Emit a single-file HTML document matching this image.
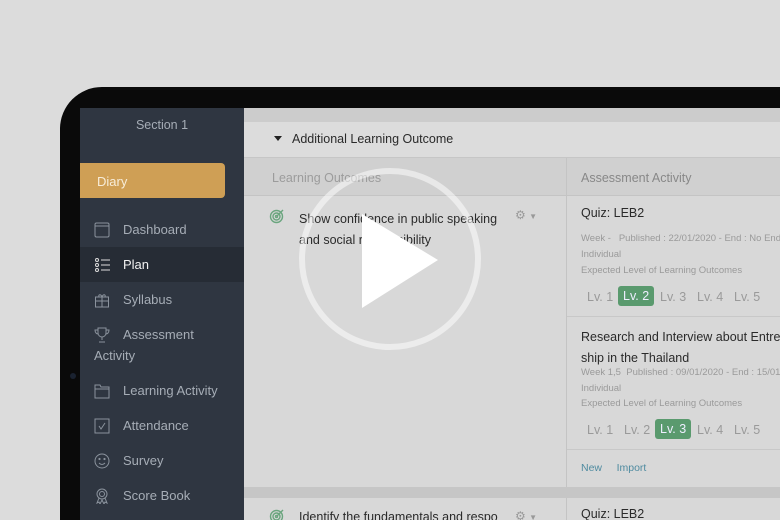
<!DOCTYPE html>
<html><head><style>
*{margin:0;padding:0;box-sizing:border-box}
html,body{width:780px;height:520px;overflow:hidden}
body{background:#dcdcdc;font-family:"Liberation Sans",sans-serif;position:relative}
.abs{position:absolute;white-space:nowrap}
.bezel{left:60px;top:87px;width:720px;height:433px;background:#0a0a0a;border-radius:42px 0 0 0}
.side{left:80px;top:108px;width:164px;height:412px;background:#2f3641}
.item{position:absolute;left:0;width:164px;color:#a6adb6;font-size:13px}
.item span{position:absolute;left:43px}
.ic{position:absolute;left:14px;width:16px;height:16px}
.main{left:244px;top:108px;width:536px;height:412px;background:#d8d8d8;overflow:hidden}
.t{color:#2a2a2a;font-size:12.5px}
.s{color:#9a9a9a;font-size:9.5px}
.lv{position:absolute;font-size:12.5px;color:#9a9a9a}
.on{background:#5a9a6e;color:#eef;border-radius:3px;padding:3px 5px}
</style></head><body>
<div class="abs bezel"></div>
<div class="abs" style="left:70px;top:373px;width:6px;height:6px;border-radius:50%;background:#1a2230"></div>
<div class="abs side">
 <div class="abs" style="left:0;top:10px;width:164px;text-align:center;color:#a6adb6;font-size:12.5px">Section 1</div>
 <div class="abs" style="left:0;top:55px;width:145px;height:35px;background:#cf9f55;border-radius:0 4px 4px 0;color:#f7ecd8;font-size:13px;padding:11px 0 0 17px">Diary</div>
 <div class="item" style="top:114px"><svg class="ic" viewBox="0 0 16 16"><rect x="1" y="1" width="14" height="14" rx="1.5" fill="none" stroke="#8b939d"/><line x1="1" y1="4" x2="15" y2="4" stroke="#8b939d"/></svg><span>Dashboard</span></div>
 <div class="abs" style="left:0;top:139px;width:164px;height:35px;background:#262c35"></div>
 <div class="item" style="top:149px;color:#f2f2f2"><svg class="ic" viewBox="0 0 16 16" stroke="#ddd" fill="none"><circle cx="3" cy="3" r="1.5"/><circle cx="3" cy="8" r="1.5"/><circle cx="3" cy="13" r="1.5"/><line x1="7" y1="3" x2="16" y2="3"/><line x1="7" y1="8" x2="16" y2="8"/><line x1="7" y1="13" x2="16" y2="13"/></svg><span>Plan</span></div>
 <div class="item" style="top:184px"><svg class="ic" viewBox="0 0 16 16" stroke="#8b939d" fill="none"><rect x="1.5" y="5" width="13" height="10"/><line x1="1.5" y1="9" x2="14.5" y2="9"/><line x1="8" y1="5" x2="8" y2="15"/><path d="M5 5C4 2 7 2 8 5C9 2 12 2 11 5"/></svg><span>Syllabus</span></div>
 <div class="item" style="top:219px"><svg class="ic" viewBox="0 0 16 16" stroke="#8b939d" fill="none"><path d="M4 1h8v5a4 4 0 0 1-8 0z"/><path d="M4 3H1c0 3 2 4 3 4M12 3h3c0 3-2 4-3 4M8 10v3M5 15h6"/></svg><span>Assessment</span></div>
 <div class="item" style="top:240px"><span style="left:14px">Activity</span></div>
 <div class="item" style="top:275px"><svg class="ic" viewBox="0 0 16 16" stroke="#8b939d" fill="none"><path d="M1 2h5l1 2h8v11H1z"/><line x1="1" y1="6" x2="15" y2="6"/></svg><span>Learning Activity</span></div>
 <div class="item" style="top:310px"><svg class="ic" viewBox="0 0 16 16" stroke="#8b939d" fill="none"><rect x="1" y="1" width="14" height="14"/><path d="M5 8l2 3 4-6"/></svg><span>Attendance</span></div>
 <div class="item" style="top:345px"><svg class="ic" viewBox="0 0 16 16" stroke="#8b939d" fill="none"><circle cx="8" cy="8" r="7"/><path d="M5 10q3 3 6 0"/><circle cx="5.5" cy="6" r=".6"/><circle cx="10.5" cy="6" r=".6"/></svg><span>Survey</span></div>
 <div class="item" style="top:380px"><svg class="ic" viewBox="0 0 16 16" stroke="#8b939d" fill="none"><circle cx="8" cy="6" r="5"/><circle cx="8" cy="6" r="2.5"/><path d="M5 10l-2 5 2-1 1 2 2-4 2 4 1-2 2 1-2-5"/></svg><span>Score Book</span></div>
</div>
<div class="abs main">
 <div class="abs" style="left:0;top:0;width:536px;height:14px;background:#cccccc"></div>
 <div class="abs" style="left:0;top:14px;width:536px;height:36px;background:#dcdcdc;border-bottom:1px solid #c6c6c6"></div>
 <div class="abs" style="left:30px;top:28px;border-left:4px solid transparent;border-right:4px solid transparent;border-top:5px solid #222"></div>
 <div class="abs t" style="left:48px;top:24px">Additional Learning Outcome</div>
 <div class="abs" style="left:0;top:50px;width:536px;height:38px;background:#d0d0d0;border-bottom:1px solid #c4c4c4"></div>
 <div class="abs" style="left:28px;top:63px;color:#9c9c9c;font-size:12.5px">Learning Outcomes</div>
 <div class="abs" style="left:337px;top:63px;color:#888;font-size:12.5px">Assessment Activity</div>
 <div class="abs" style="left:322px;top:50px;width:1px;height:330px;background:#c4c4c4"></div>
 <svg class="abs" style="left:25px;top:100px" width="16" height="16" viewBox="0 0 16 16" fill="none" stroke="#6aa57e" stroke-width="1.4"><circle cx="7.5" cy="8.5" r="6"/><circle cx="7.5" cy="8.5" r="3.5"/><circle cx="7.5" cy="8.5" r="1"/><path d="M8 8l6-6"/></svg>
 <div class="abs t" style="left:55px;top:101px;line-height:21px">Show confidence in public speaking<br>and social responsibility</div>
 <div class="abs" style="left:271px;top:100px;color:#999;font-size:12px">⚙ <span style="font-size:8px">▼</span></div>
 <div class="abs t" style="left:337px;top:98px">Quiz: LEB2</div>
 <div class="abs s" style="left:337px;top:123px;line-height:16px">Week -&nbsp;&nbsp; Published : 22/01/2020 - End : No End<br>Individual<br>Expected Level of Learning Outcomes</div>
 <div class="lv" style="left:343px;top:182px">Lv. 1</div><div class="lv on" style="left:374px;top:178px">Lv. 2</div><div class="lv" style="left:416px;top:182px">Lv. 3</div><div class="lv" style="left:453px;top:182px">Lv. 4</div><div class="lv" style="left:490px;top:182px">Lv. 5</div>
 <div class="abs" style="left:323px;top:208px;width:213px;height:1px;background:#c8c8c8"></div>
 <div class="abs t" style="left:337px;top:219px;line-height:21px">Research and Interview about Entrepreneur-<br>ship in the Thailand</div>
 <div class="abs s" style="left:337px;top:257px;line-height:15.5px">Week 1,5&nbsp; Published : 09/01/2020 - End : 15/01<br>Individual<br>Expected Level of Learning Outcomes</div>
 <div class="lv" style="left:343px;top:315px">Lv. 1</div><div class="lv" style="left:380px;top:315px">Lv. 2</div><div class="lv on" style="left:411px;top:311px">Lv. 3</div><div class="lv" style="left:453px;top:315px">Lv. 4</div><div class="lv" style="left:490px;top:315px">Lv. 5</div>
 <div class="abs" style="left:323px;top:341px;width:213px;height:1px;background:#c8c8c8"></div>
 <div class="abs" style="left:337px;top:354px;font-size:10.5px;color:#4f8ba0">New&nbsp;&nbsp;&nbsp;&nbsp; Import</div>
 <div class="abs" style="left:0;top:379px;width:536px;height:11px;background:#c6c6c6"></div>
 <svg class="abs" style="left:25px;top:400px" width="16" height="16" viewBox="0 0 16 16" fill="none" stroke="#6aa57e" stroke-width="1.4"><circle cx="7.5" cy="8.5" r="6"/><circle cx="7.5" cy="8.5" r="3.5"/><circle cx="7.5" cy="8.5" r="1"/><path d="M8 8l6-6"/></svg>
 <div class="abs t" style="left:55px;top:402px">Identify the fundamentals and respo</div>
 <div class="abs" style="left:271px;top:401px;color:#999;font-size:12px">⚙ <span style="font-size:8px">▼</span></div>
 <div class="abs" style="left:322px;top:390px;width:1px;height:30px;background:#c4c4c4"></div>
 <div class="abs t" style="left:337px;top:399px">Quiz: LEB2</div>
</div>
<svg class="abs" style="left:0;top:0" width="780" height="520"><circle cx="390" cy="259" r="88" fill="none" stroke="rgba(255,255,255,0.5)" stroke-width="6"/><path d="M362 214L438 260L362 308Z" fill="#fff"/></svg>
</body></html>
